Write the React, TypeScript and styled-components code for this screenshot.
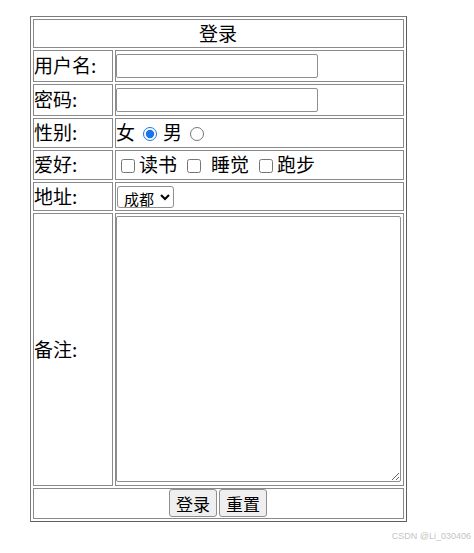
import React from "react";
import styled, { createGlobalStyle } from "styled-components";

const GlobalStyle = createGlobalStyle`
  html, body {
    margin: 0;
    padding: 0;
    background: #fff;
  }
  body {
    font-family: "Noto Sans CJK SC", "Microsoft YaHei", sans-serif;
    color: #000;
  }
`;

const Page = styled.div`
  position: relative;
  width: 474px;
  height: 553px;
  padding: 16px 0 0 30px;
  box-sizing: border-box;
`;

const FormTable = styled.table`
  border: 1px solid #7a7a7a;
  border-right-color: #5e5e5e;
  border-bottom-color: #5e5e5e;
  border-spacing: 2px;
  font-size: 19px;
  line-height: 1;
`;

const Cell = styled.td<{ $w?: number; $h?: number; $center?: boolean }>`
  border: 1px solid #8a8a8a;
  padding: 0 1px 3px 0;
  box-sizing: border-box;
  width: ${(p) => (p.$w ? `${p.$w}px` : "auto")};
  height: ${(p) => (p.$h ? `${p.$h}px` : "auto")};
  text-align: ${(p) => (p.$center ? "center" : "left")};
  vertical-align: middle;
  white-space: nowrap;
`;

const FieldCell = styled(Cell)`
  padding-bottom: 1px;
`;

const TextInput = styled.input`
  width: 202px;
  height: 24px;
  box-sizing: border-box;
  margin: 0;
  border: 1px solid #8f8f8f;
  border-radius: 2px;
  font-size: 14px;
  vertical-align: middle;
`;

const Radio = styled.input`
  width: 14px;
  height: 14px;
  margin: 0 6px 0 8px;
  vertical-align: -1px;
  accent-color: #1a73e8;
`;

const Check = styled.input`
  width: 14px;
  height: 14px;
  margin: 0 4px 0 5px;
  vertical-align: -1px;
`;

const Choice = styled.span<{ $gap?: number }>`
  margin-right: ${(p) => p.$gap ?? 0}px;
`;

const CitySelect = styled.select`
  height: 22px;
  margin: 0 0 0 1px;
  padding: 0 2px;
  font-family: "Noto Sans CJK SC", sans-serif;
  font-size: 15px;
  line-height: 20px;
  border: 1px solid #8f8f8f;
  border-radius: 3px;
  background: #fff;
  vertical-align: middle;
`;

const Notes = styled.textarea`
  display: block;
  width: 285px;
  height: 266px;
  box-sizing: border-box;
  margin: 0;
  border: 1px solid #8f8f8f;
  border-radius: 2px;
`;

const Btn = styled.button`
  height: 28px;
  width: 48px;
  margin: 0 1px;
  padding: 0;
  font-family: "Noto Sans CJK SC", sans-serif;
  font-size: 17px;
  color: #000;
  background: #efefef;
  border: 1px solid #8f8f8f;
  border-radius: 3px;
  vertical-align: middle;
`;

const Watermark = styled.div`
  position: absolute;
  right: 3px;
  bottom: 12px;
  font-family: "Liberation Sans", Arial, sans-serif;
  font-size: 9px;
  color: #c4c4c4;
`;

export default function App() {
  return (
    <>
      <GlobalStyle />
      <Page>
        <FormTable>
          <tbody>
            <tr>
              <Cell colSpan={2} $h={29} $center>
                登录
              </Cell>
            </tr>
            <tr>
              <Cell $w={80} $h={32}>用户名:</Cell>
              <FieldCell $w={289}>
                <TextInput type="text" />
              </FieldCell>
            </tr>
            <tr>
              <Cell $h={32}>密码:</Cell>
              <FieldCell>
                <TextInput type="password" />
              </FieldCell>
            </tr>
            <tr>
              <Cell $h={30}>性别:</Cell>
              <Cell>
                女<Radio type="radio" name="sex" defaultChecked />
                <Choice>男</Choice>
                <Radio type="radio" name="sex" style={{ marginLeft: 8 }} />
              </Cell>
            </tr>
            <tr>
              <Cell $h={30}>爱好:</Cell>
              <Cell>
                <Check type="checkbox" style={{ marginLeft: 5 }} />
                <Choice $gap={5}>读书</Choice>
                <Check type="checkbox" />
                <Choice $gap={5} style={{ marginLeft: 6 }}>睡觉</Choice>
                <Check type="checkbox" />
                <Choice>跑步</Choice>
              </Cell>
            </tr>
            <tr>
              <Cell $h={29}>地址:</Cell>
              <FieldCell>
                <CitySelect defaultValue="cd">
                  <option value="cd">成都</option>
                  <option value="bj">北京</option>
                  <option value="sh">上海</option>
                </CitySelect>
              </FieldCell>
            </tr>
            <tr>
              <Cell $h={273}>备注:</Cell>
              <FieldCell>
                <Notes />
              </FieldCell>
            </tr>
            <tr>
              <FieldCell colSpan={2} $h={31} $center>
                <Btn type="submit">登录</Btn>
                <Btn type="reset">重置</Btn>
              </FieldCell>
            </tr>
          </tbody>
        </FormTable>
        <Watermark>CSDN @Li_030406</Watermark>
      </Page>
    </>
  );
}
